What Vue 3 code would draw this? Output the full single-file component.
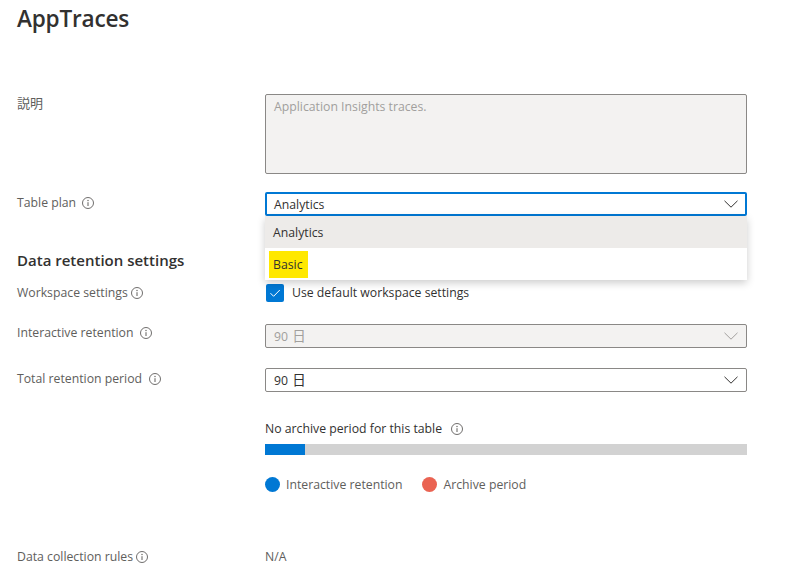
<template>
  <div class="page">
    <h1 class="title">AppTraces</h1>

    <div class="row row-desc">
      <div class="label cjk">説明</div>
      <div class="textarea">Application Insights traces.</div>
    </div>

    <div class="row row-plan">
      <div class="label">Table plan <InfoIcon class="info" /></div>
      <div class="select-wrap">
        <div class="select focused">
          <span class="select-text">Analytics</span>
          <svg class="chevron" viewBox="0 0 14 8"><path d="M.5.8 7 7.2 13.500.8" /></svg>
        </div>
        <div class="menu">
          <div class="option selected">Analytics</div>
          <div class="option"><span class="marker">Basic</span></div>
        </div>
      </div>
    </div>

    <h2 class="section">Data retention settings</h2>

    <div class="row row-workspace">
      <div class="label">Workspace settings <InfoIcon class="info" /></div>
      <div class="check-line">
        <span class="checkbox">
          <svg viewBox="0 0 18 18"><path d="M4.500 9.200 7.600 12.300 13.800 6" /></svg>
        </span>
        Use default workspace settings
      </div>
    </div>

    <div class="row row-interactive">
      <div class="label">Interactive retention <InfoIcon class="info info-gap" /></div>
      <div class="select disabled">
        <span class="select-text">90 <span class="day">日</span></span>
        <svg class="chevron" viewBox="0 0 14 8"><path d="M.5.8 7 7.2 13.500.8" /></svg>
      </div>
    </div>

    <div class="row row-total">
      <div class="label">Total retention period <InfoIcon class="info info-gap" /></div>
      <div class="select">
        <span class="select-text">90 <span class="day">日</span></span>
        <svg class="chevron" viewBox="0 0 14 8"><path d="M.5.8 7 7.2 13.500.8" /></svg>
      </div>
    </div>

    <div class="row row-archive">
      <div></div>
      <div>
        <div class="archive-title">No archive period for this table <InfoIcon class="info archive-info" /></div>
        <div class="bar"><div class="bar-fill" :style="{ width: interactiveShare + '%' }"></div></div>
        <div class="legend">
          <span class="legend-item"><i class="dot blue"></i>Interactive retention</span>
          <span class="legend-item"><i class="dot red"></i>Archive period</span>
        </div>
      </div>
    </div>

    <div class="row row-rules">
      <div class="label">Data collection rules <InfoIcon class="info" /></div>
      <div class="value">N/A</div>
    </div>
  </div>
</template>

<script setup>
import { h } from 'vue'

const interactiveShare = 8.3

// small circled "i" used next to the labels
const InfoIcon = () =>
  h('svg', { viewBox: '0 0 12 12', width: 12, height: 12 }, [
    h('circle', { cx: 6, cy: 6, r: 5.5, fill: 'none', stroke: '#605e5c', 'stroke-width': 0.9 }),
    h('path', { d: 'M6 5.200V9', stroke: '#605e5c', 'stroke-width': 1, fill: 'none' }),
    h('circle', { cx: 6, cy: 3.500, r: 0.7, fill: '#605e5c' })
  ])
</script>

<style>
body {
  background: #fff;
  overflow: hidden;
}
</style>

<style scoped>
.page {
  width: 793px;
  height: 582px;
  overflow: hidden;
  box-sizing: border-box;
  padding-left: 17px;
  font-family: "Open Sans", "Noto Sans CJK JP", sans-serif;
  font-size: 12.25px;
  color: #323130;
}

.title {
  margin: 0;
  padding-top: 4px;
  height: 30px;
  line-height: 30px;
  font-size: 22.6px;
  font-weight: 600;
  letter-spacing: -0.2px;
}

.row {
  display: grid;
  grid-template-columns: 248px 482px;
}

.label {
  color: #605e5c;
  line-height: 18px;
  display: flex;
  align-items: center;
  gap: 3px;
  height: 18px;
  white-space: nowrap;
}

.label.cjk {
  font-size: 13px;
}

.info {
  flex: none;
}

.info-gap {
  margin-left: 4px;
}

.row-desc {
  margin-top: 60px;
}

.textarea {
  height: 80px;
  box-sizing: border-box;
  background: #f3f2f1;
  border: 1px solid #8a8886;
  border-radius: 2px;
  padding: 3px 8px;
  line-height: 18px;
  color: #a19f9d;
}

.row-plan {
  margin-top: 18px;
}

.row-plan .label {
  margin-top: 2px;
  gap: 6px;
}

.select-wrap {
  position: relative;
}

.select {
  height: 24px;
  box-sizing: border-box;
  border: 1px solid #8a8886;
  border-radius: 2px;
  padding: 0 8px;
  display: flex;
  align-items: center;
  justify-content: space-between;
  background: #fff;
  line-height: 18px;
}

.select-text {
  padding-top: 1px;
}

.day {
  font-size: 13.5px;
  margin-left: 1px;
}

.select.focused {
  border: 2px solid #0078d4;
  padding: 0 7px;
}

.select.disabled {
  background: #f3f2f1;
  color: #a19f9d;
}

.chevron {
  width: 14px;
  height: 8px;
  fill: none;
  stroke: #323130;
  stroke-width: 1;
}

.disabled .chevron {
  stroke: #a19f9d;
}

.menu {
  position: absolute;
  left: 0;
  right: 0;
  top: 24px;
  background: #fff;
  box-shadow: 0 3px 8px rgba(0, 0, 0, 0.2);
  z-index: 2;
}

.option {
  height: 32px;
  padding: 0 8px;
  display: flex;
  align-items: center;
}

.option.selected {
  background: #edebe9;
}

.marker {
  background: #ffe800;
  margin-left: -4px;
  padding: 0 5px 0 4px;
  height: 27px;
  line-height: 28px;
}

.section {
  margin: 35px 0 0;
  height: 18px;
  line-height: 18px;
  font-size: 15px;
  font-weight: 600;
}

.row-workspace {
  margin-top: 15px;
}

.check-line {
  display: flex;
  align-items: center;
  gap: 8px;
  height: 18px;
  margin-left: 1px;
  line-height: 18px;
}

.checkbox {
  width: 18px;
  height: 18px;
  background: #0078d4;
  border-radius: 2px;
  display: block;
}

.checkbox svg {
  display: block;
  fill: none;
  stroke: #fff;
  stroke-width: 1;
}

.row-interactive {
  margin-top: 22px;
}

.row-total {
  margin-top: 20px;
}

.row-total .label {
  margin-top: 2px;
}

.row-archive {
  margin-top: 28px;
}

.archive-title {
  height: 18px;
  line-height: 18px;
  display: flex;
  align-items: center;
  gap: 3px;
}

.archive-info {
  margin-left: 6px;
}

.bar {
  margin-top: 6px;
  height: 11px;
  background: #d2d2d2;
}

.bar-fill {
  height: 100%;
  background: #0078d4;
}

.legend {
  margin-top: 20px;
  display: flex;
  gap: 20px;
}

.legend-item {
  display: flex;
  align-items: center;
  gap: 6px;
  height: 18px;
  color: #605e5c;
}

.dot {
  width: 15px;
  height: 15px;
  border-radius: 50%;
}

.blue {
  background: #0078d4;
}

.red {
  background: #ea6352;
}

.row-rules {
  margin-top: 55px;
}

.value {
  color: #605e5c;
  line-height: 18px;
}
</style>
